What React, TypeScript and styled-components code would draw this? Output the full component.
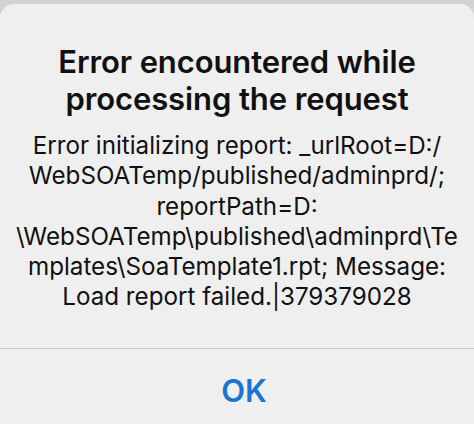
import React from "react";
import styled, { createGlobalStyle } from "styled-components";

const Global = createGlobalStyle`
  html, body { margin: 0; padding: 0; background: #cfcfcf; }
  body { width: 474px; height: 424px; overflow: hidden; }
`;

const Page = styled.div`
  width: 474px;
  height: 424px;
  padding-top: 4px;
  box-sizing: border-box;
  background: #d2d2d2;
`;

const Alert = styled.div`
  height: 420px;
  background: #efefef;
  border-radius: 14px 14px 0 0;
  display: flex;
  flex-direction: column;
  font-family: Inter, "Liberation Sans", sans-serif;
  color: #111;
`;

const Content = styled.div`
  height: 344px;
  box-sizing: border-box;
  padding: 39px 0 0;
  display: flex;
  flex-direction: column;
  align-items: center;
  text-align: center;
`;

const Title = styled.h1`
  margin: 0;
  font-size: 31px;
  line-height: 37px;
  font-weight: 600;
  letter-spacing: -0.1px;
`;

const Message = styled.p`
  margin: 14px 0 0;
  font-size: 24.2px;
  line-height: 30.3px;
  font-weight: 400;
`;

const Line = styled.span`
  display: block;
  white-space: nowrap;
`;

const Separator = styled.div`
  height: 1px;
  background: #cacaca;
`;

const Button = styled.button`
  flex: 1;
  border: 0;
  background: transparent;
  font-family: Inter, "Liberation Sans", sans-serif;
  font-size: 31px;
  font-weight: 600;
  color: #1a74d6;
  padding: 8px 0 0 14px;
`;

const lines = [
  "Error initializing report: _urlRoot=D:/",
  "WebSOATemp/published/adminprd/;",
  "reportPath=D:",
  "\\WebSOATemp\\published\\adminprd\\Te",
  "mplates\\SoaTemplate1.rpt; Message:",
  "Load report failed.|379379028",
];

export default function App() {
  return (
    <Page>
      <Global />
      <Alert>
        <Content>
          <Title>
            <Line>Error encountered while</Line>
            <Line>processing the request</Line>
          </Title>
          <Message>
            {lines.map((l) => (
              <Line key={l}>{l}</Line>
            ))}
          </Message>
        </Content>
        <Separator />
        <Button>OK</Button>
      </Alert>
    </Page>
  );
}
